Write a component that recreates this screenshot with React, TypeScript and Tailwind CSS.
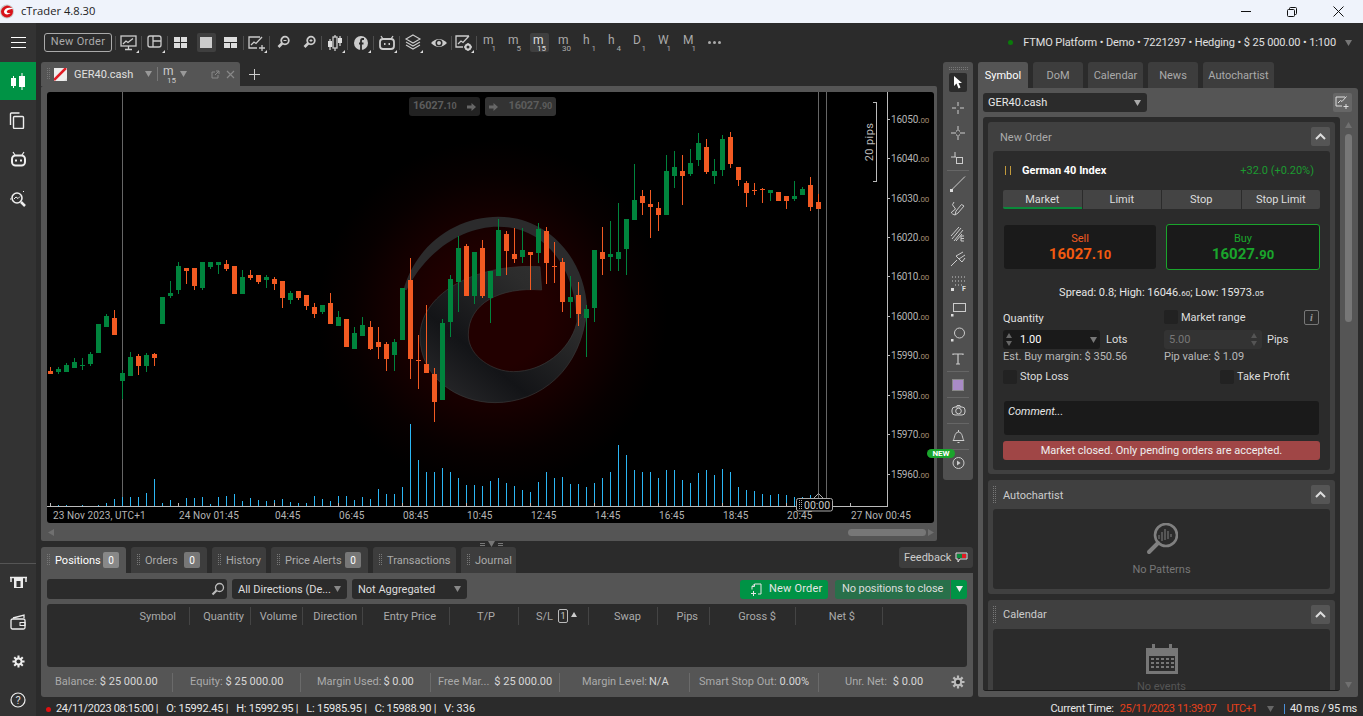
import React from "react";

const FONT = "Roboto,sans-serif";
const C: number[][] = [
[831,843,852,852,0],[831,837,846,852,1],[819,825,846,846,1],[804,816,834,834,1],[804,825,828,840,1],[786,792,822,828,1],[702,702,789,789,1],[672,678,711,711,1],[660,684,735,735,0],[840,849,873,927,1],
[786,801,858,858,1],[792,798,828,855,0],[789,795,828,846,1],[789,792,804,828,0],[621,621,702,702,1],[573,609,618,624,1],[516,528,600,612,1],[534,534,543,582,0],[534,534,588,600,0],[516,516,594,600,1],
[516,516,531,537,1],[516,516,525,552,1],[510,522,537,543,0],[528,528,612,612,0],[540,561,612,612,1],[540,555,564,570,0],[555,555,576,582,0],[555,561,570,594,1],[561,567,582,600,0],[573,573,624,654,0],
[603,609,630,642,1],[603,603,624,630,0],[615,615,648,660,0],[639,651,672,684,0],[645,645,666,672,1],[609,639,702,702,0],[663,681,708,708,1],[687,687,771,771,0],[711,729,777,777,1],[681,705,738,738,1],
[693,711,777,780,0],[711,756,771,807,0],[756,762,807,843,0],[747,756,795,843,1],[594,594,750,750,1],[504,570,807,867,0],[735,810,813,897,0],[645,822,849,849,0],[834,852,936,996,0],[687,699,930,930,1],
[555,567,696,741,1],[438,474,576,666,1],[462,468,618,618,0],[486,486,618,642,1],[450,474,618,624,0],[543,543,624,699,1],[387,420,558,558,1],[423,432,483,555,0],[414,492,507,519,0],[414,480,501,519,1],
[486,486,495,600,0],[399,417,489,519,1],[411,423,519,582,0],[456,528,531,579,0],[504,516,636,666,0],[558,621,636,684,1],[576,615,672,708,0],[645,657,684,801,1],[480,480,654,696,1],[411,486,507,555,0],
[393,492,501,543,1],[339,486,507,543,1],[387,387,477,555,1],[222,330,390,390,1],[300,318,339,375,0],[300,342,351,444,0],[336,354,375,423,0],[195,243,375,375,1],[183,231,258,294,1],[195,243,258,345,0],
[177,219,252,258,1],[129,159,210,228,1],[147,171,246,252,0],[207,243,258,282,1],[135,147,240,258,1],[126,141,222,234,0],[231,231,270,288,0],[273,279,309,351,0],[279,300,303,315,0],[294,297,300,339,0],
[300,300,309,333,1],[306,306,333,333,0],[318,318,333,357,0],[273,318,327,333,1],[291,297,315,315,1],[261,285,351,363,0],[312,336,357,357,0],
];
const VZ = [372,375,375,378,375,378,375,369,357,351,351,351,339,297,369,360,369,354,354,351,372,351,348,342,363,354,360,363,360,357,366,369,369,348,357,363,348,348,360,351,357,327,342,342,321,132,240,276,276,264,276,294,315,315,318,303,294,309,318,330,336,306];
const VA = [472,478,477,484,484,487,483,478,472,445,455,470,472,472,478,470,470,480,483,473,470,475,469,472,487,490,491,494,495,494,495,497,497,495,498];
const vols: number[] = [...VZ.map((z) => 380 + z / 3), ...VA];
const prices = [["16050",119],["16040",158],["16030",197.5],["16020",237],["16010",276],["16000",316],["15990",355],["15980",394.6],["15970",434],["15960",473.6]] as [string, number][];
const times = [["23 Nov 2023, UTC+1",53,50],["24 Nov 01:45",179,178],["04:45",275,274],["06:45",339,338],["08:45",403,402],["10:45",467,466],["12:45",531,530],["14:45",595,594],["16:45",659,658],["18:45",723,722],["20:45",787,786],["27 Nov 00:45",851,850]] as [string, number, number][];

const Svg = ({ s = 20, w, h, vb, children, className = "" }: any) => (
  <svg width={w ?? s} height={h ?? s} viewBox={vb ?? "0 0 20 20"} fill="none" stroke="currentColor" strokeWidth={1.3} className={`shrink-0 ${className}`}>{children}</svg>
);
const Corner = () => <polygon points="20,17 20,20 17,20" fill="#ddd" stroke="none" />;
const Caret = ({ c = "#999" }: { c?: string }) => (
  <svg width="7" height="6" viewBox="0 0 7 6" className="shrink-0"><polygon points="0,0 7,0 3.5,6" fill={c} /></svg>
);
const Dots = ({ h = 12 }: { h?: number }) => (
  <svg width="3" height={h} className="shrink-0">
    {Array.from({ length: Math.floor(h / 2) }).map((_, i) => (
      <g key={i} fill="#777"><rect x="0" y={i * 2} width="1" height="1" /><rect x="2" y={i * 2} width="1" height="1" /></g>
    ))}
  </svg>
);

const Chevron = () => (
  <div className="w-[19px] h-[19px] rounded-[2px] bg-[#555] flex items-center justify-center text-[#ddd]">
    <Svg w={11} h={7} vb="0 0 11 7"><path d="M1 6 L5.5 1.5 L10 6" strokeWidth={2} /></Svg>
  </div>
);

const icons: Record<string, React.ReactNode> = {
  monitor: <Svg><rect x="2" y="3" width="15" height="10" /><path d="M4 11 l3-3 2 1.5 5-4M9.5 13v3M6 16.5h7" /><Corner /></Svg>,
  layout: <Svg><rect x="3" y="3" width="13" height="11" rx="2" /><path d="M8 3v11M8 8h8" /><Corner /></Svg>,
  grid: <Svg><g fill="#ddd" stroke="none"><rect x="3" y="4" width="6" height="5" /><rect x="10" y="4" width="6" height="5" /><rect x="3" y="10" width="6" height="5" /><rect x="10" y="10" width="6" height="5" /></g></Svg>,
  single: <Svg><rect x="4" y="4" width="12" height="11" fill="#ccc" stroke="none" /></Svg>,
  split: <Svg><g fill="#ddd" stroke="none"><rect x="3" y="4" width="13" height="5" /><rect x="3" y="10" width="6" height="5" /><rect x="10" y="10" width="6" height="5" /></g></Svg>,
  add: <Svg><path d="M13 4H2v11h8M4 12l3-3 2 1.5 6-6.5M15 12v6M12 15h6" /><Corner /></Svg>,
  zoomOut: <Svg><circle cx="12" cy="7.500" r="3.800" strokeWidth={1.800} /><path d="M9.500 10 L5.500 14" strokeWidth={2.600} /><path d="M10.500 7.500h3" strokeWidth={1} /></Svg>,
  zoomIn: <Svg><circle cx="12" cy="7.500" r="3.800" strokeWidth={1.800} /><path d="M9.500 10 L5.500 14" strokeWidth={2.600} /><path d="M10.500 7.500h3M12 6v3" strokeWidth={1} /></Svg>,
  candles: <Svg><path d="M5 6v11M10 2v16M15 3v10" /><rect x="3" y="8" width="4" height="6" fill="#ddd" stroke="none" /><rect x="8" y="4" width="4" height="11" fill="#2b2b2b" /><rect x="13" y="5" width="4" height="5" fill="#ddd" stroke="none" /><Corner /></Svg>,
  fb: <Svg><circle cx="10" cy="10" r="7" fill="#ccc" stroke="none" /><path d="M13 6h-1.500Q10 6 10 8v9M8 10.500h4.500" stroke="#2b2b2b" strokeWidth={1.800} /><Corner /></Svg>,
  robot: <Svg><path d="M4 3l2 3M16 3l-2 3" /><rect x="3" y="6" width="14" height="10" rx="3" strokeWidth={1.800} /><path d="M7 11h1.500M11.500 11H13" strokeWidth={2} /><Corner /></Svg>,
  layers: <Svg><path d="M10 2l7 4-7 4-7-4zM3 9l7 4 7-4M3 12l7 4 7-4" strokeWidth={1.100} /><Corner /></Svg>,
  eye: <Svg><path d="M2 10q8-8 16 0q-8 8-16 0z" fill="#ccc" stroke="none" /><circle cx="10" cy="10" r="3.500" fill="#2b2b2b" stroke="none" /><circle cx="10" cy="10" r="2" fill="#ccc" stroke="none" /></Svg>,
  gearChart: <Svg><path d="M15 3H2v11h7M4 11l3-3 2 1.500 6-6.500" /><circle cx="14" cy="14" r="2.500" strokeWidth={2} /><path d="M14 10v1.500M14 16.500V18M10 14h1.500M16.500 14H18" strokeWidth={1.400} /><Corner /></Svg>,
};

const toolbar: [string, number, string?][] = [["monitor",26],["layout",26],["grid",26],["single",25,"on"],["split",25],["add",26],["zoomOut",26],["zoomIn",26],["candles",26],["fb",26],["robot",26],["layers",26],["eye",26],["gearChart",25]];
const seps = new Set(["monitor","layout","grid","add","zoomOut","candles","fb","robot","layers","gearChart"]);
const tfs: [string, string, boolean?][] = [["m","1"],["m","5"],["m","15",true],["m","30"],["h","1"],["h","4"],["D","1"],["W","1"],["M","1"]];

const Sep = () => <div className="h-[14px] w-px bg-[#4e4e4e] shrink-0" />;

function Toolbar() {
  return (
    <div className="h-[39px] flex items-center pl-[8px] shrink-0">
      <div className="w-[68px] h-[19px] border border-[#aaa] rounded-[3px] text-[#aaa] flex items-center justify-center shrink-0 tracking-[0.3px]">New Order</div>
      <div className="w-[3px]" />
      {toolbar.map(([n, w, on]) => (
        <div key={n} style={{ width: w }} className="h-[19px] flex items-center shrink-0">
          {seps.has(n) ? <Sep /> : <div className="w-px" />}
          <div className="flex-1 h-[19px] flex items-center justify-center text-[#ccc]">
            <div className={`w-[19px] h-[19px] flex items-center justify-center rounded-[2px] ${on ? "bg-[#3f3f3f]" : ""}`}>{icons[n]}</div>
          </div>
        </div>
      ))}
      <Sep />
      <div className="w-px" />
      {tfs.map(([a, b, on], i) => (
        <div key={i} className="w-[25px] h-[19px] flex shrink-0">
          <div className={`ml-[2px] w-[19px] h-[19px] rounded-[2px] pl-[3px] relative text-[12px] leading-[15px] ${on ? "bg-[#3f3f3f] text-[#ddd]" : "text-[#aaa]"}`}>
            {a}
            <span className="absolute left-[3px] w-[13px] text-right top-[11px] text-[8px] leading-[9px]">{b}</span>
          </div>
        </div>
      ))}
      <div className="ml-[5px] flex gap-[2px]">
        {[0, 1, 2].map((i) => <div key={i} className="w-[3px] h-[3px] rounded-full bg-[#aaa]" />)}
      </div>
      <div className="ml-auto flex items-center pr-[11px] text-[#e0e0e0]">
        <div className="w-[5px] h-[5px] rounded-full bg-[#0a7a0a] mr-[10px]" />
        <span className="whitespace-nowrap mt-[1px] tracking-[-0.11px]">FTMO Platform • Demo • 7221297 • Hedging • $ 25 000.00 • 1:100</span>
        <div className="ml-[9px]"><Caret c="#777" /></div>
      </div>
    </div>
  );
}

function Chart() {
  return (
    <div className="relative w-[887px] h-[431px] bg-black rounded-[3px] overflow-hidden">
      <svg width="887" height="431" viewBox="47 92 887 431" className="block">
        <defs>
          <radialGradient id="glow" gradientUnits="userSpaceOnUse" cx="492" cy="315" r="175">
            <stop offset="0.3" stopColor="#220000" />
            <stop offset="0.55" stopColor="#160000" />
            <stop offset="0.8" stopColor="#070000" />
            <stop offset="1" stopColor="#000" />
          </radialGradient>
          <linearGradient id="sw" x1="0" y1="1" x2="1" y2="0">
            <stop offset="0" stopColor="#2e2e30" />
            <stop offset="0.35" stopColor="#131417" />
            <stop offset="0.75" stopColor="#2c2c2c" />
            <stop offset="1" stopColor="#333" />
          </linearGradient>
        </defs>
        <circle cx="492" cy="315" r="175" fill="url(#glow)" />
        <g transform="translate(400 90) scale(0.3333)">
          <path d="M10 600 C50 460 170 380 295 380 C440 380 555 500 562 660 L530 700 C530 530 430 410 295 410 C190 410 80 480 20 600Z" fill="#2b2b2c" />
          <path d="M420 530 L425 600 C300 590 205 640 205 735 C205 800 280 845 340 845 C430 845 510 780 530 700 L560 660 C545 840 420 938 285 938 C170 938 60 860 60 740 C60 620 210 520 420 530Z" fill="url(#sw)" stroke="#3a3a3a" strokeWidth="2" />
        </g>
        <g shapeRendering="crispEdges">
          <line x1="122.5" y1="92" x2="122.5" y2="506" stroke="#666" />
          <line x1="818.5" y1="92" x2="818.5" y2="506" stroke="#666" />
          <line x1="826.5" y1="92" x2="826.5" y2="506" stroke="#666" />
          {vols.map((y, i) => y < 506 ? <rect key={i} x={50 + 8 * i} y={y} width="1" height={506 - y} fill="#2bb6f4" /> : null)}
          {C.map((c, i) => {
            const col = c[4] ? "#00843d" : "#f25a22";
            return (
              <g key={i} fill={col}>
                <rect x={50 + 8 * i} y={90 + c[0] / 3} width="1" height={(c[3] - c[0]) / 3} />
                <rect x={48 + 8 * i} y={90 + c[1] / 3} width="5" height={(c[2] - c[1]) / 3} />
              </g>
            );
          })}
          <rect x="47" y="506" width="841" height="1" fill="#bbb" />
          <rect x="887" y="92" width="1" height="415" fill="#bbb" />
          {times.map(([t, , x]) => <rect key={t} x={x} y="503" width="1" height="3" fill="#bbb" />)}
          {prices.map(([p, y]) => <rect key={p} x="888" y={y} width="2" height="1" fill="#bbb" />)}
          <path d="M873 102.5h3.5v79h-3.5" stroke="#bbb" fill="none" />
        </g>
        <g fontFamily={FONT} fontSize="10" fill="#b4b4b4">
          {prices.map(([p, y]) => (
            <text key={p} x="891" y={y + 4} letterSpacing="-0.2">{p}.<tspan fontSize="8" fill="#a08a70">00</tspan></text>
          ))}
          {times.map(([t, x]) => <text key={t} x={x} y="519" letterSpacing="0.1">{t}</text>)}
          <text transform="translate(873 142) rotate(-90)" textAnchor="middle" fontSize="11" letterSpacing="0.4" fill="#bbb">20 pips</text>
        </g>
        <path d="M814 498 L818.5 493.5 L823 498" stroke="#aaa" fill="none" />
        <rect x="796.5" y="498.5" width="36" height="12.500" rx="2" fill="#000" stroke="#aaa" />
        <g fill="#aaa">{[500, 502, 504, 506, 508].map((y) => <g key={y}><rect x="799" y={y} width="1" height="1" /><rect x="801" y={y} width="1" height="1" /></g>)}</g>
        <text x="804" y="508.500" fontFamily={FONT} fontSize="10.500" fill="#ccc">00:00</text>
      </svg>
      <div className="absolute left-[362px] top-[5px] flex gap-[5px] font-bold text-[#5c5c5c]">
        <PriceChip bg="bg-[#222]" v="16027." d="10" arrow="r" />
        <PriceChip bg="bg-[#333]" v="16027." d="90" arrow="l" />
      </div>
    </div>
  );
}

const PriceChip = ({ bg, v, d, arrow }: any) => (
  <div className={`w-[71px] h-[19px] rounded-[3px] ${bg} flex items-center px-[4px] justify-between text-[#5c5c5c]`}>
    {arrow === "l" && <Arrow />}
    <span className="text-[11px] tracking-[-0.2px] whitespace-nowrap">{v}<span className="text-[9px]">{d}</span></span>
    {arrow === "r" && <Arrow />}
  </div>
);
const Arrow = () => <svg width="9" height="8" viewBox="0 0 9 8" className="shrink-0"><path d="M0 2.500h4.500V0L9 4 4.500 8V5.500H0z" fill="#666" /></svg>;

function ChartPanel() {
  return (
    <div className="w-[896px] flex flex-col shrink-0">
      <div className="h-[24px] flex items-end shrink-0">
        <div className="w-[199px] h-[24px] bg-[#555] rounded-t-[3px] flex items-center text-[#e0e0e0]">
          <div className="ml-[6px]"><Dots /></div>
          <svg width="13" height="13" viewBox="0 0 13 13" className="ml-[4px] shrink-0"><rect width="13" height="13" fill="#eee" /><path d="M0 12 L12 0" stroke="#e01b24" strokeWidth="2.500" /><polygon points="13,10 13,13 10,13" fill="#ddd" /></svg>
          <span className="ml-[7px] mt-[2px] w-[62px] whitespace-nowrap">GER40.cash</span>
          <div className="ml-[9px]"><Caret /></div>
          <div className="ml-[5px] w-px h-[14px] bg-[#777]" />
          <div className="ml-[5px] w-[18px] h-[20px] relative text-[12px] leading-[14px] text-[#ccc]">m<span className="absolute left-0 w-[13px] text-right top-[13px] text-[8px] leading-[8px]">15</span></div>
          <div className="-ml-[1px]"><Caret /></div>
          <div className="ml-[24px] text-[#888]"><Svg s={9} vb="0 0 9 9"><path d="M7 5v3H1V2h3M5 1h3v3M8 1L4 5" strokeWidth={1} /></Svg></div>
          <div className="ml-[6px] text-[#888]"><Svg s={9} vb="0 0 9 9"><path d="M1 1l7 7M8 1l-7 7" strokeWidth={1.200} /></Svg></div>
        </div>
        <div className="ml-[9px] h-[24px] flex items-center text-[#ccc]"><Svg s={11} vb="0 0 11 11"><path d="M5.500 0v11M0 5.500h11" strokeWidth={1} /></Svg></div>
      </div>
      <div className="h-[455px] bg-[#555] rounded-[2px] pt-[6px] pl-[6px] flex flex-col">
        <Chart />
        <div className="h-[18px] flex items-center pl-[1px] pr-[3px] text-[#777]">
          <svg width="6" height="7" viewBox="0 0 6 7"><polygon points="6,0 6,7 0,3.500" fill="#707070" /></svg>
          <div className="ml-auto w-[78px] h-[7px] rounded-full bg-[#777]" />
          <svg width="6" height="7" viewBox="0 0 6 7" className="ml-[2px]"><polygon points="0,0 0,7 6,3.500" fill="#707070" /></svg>
        </div>
      </div>
    </div>
  );
}

const pal: (string | [string, React.ReactNode])[] = [
  "s",
  ["cross", <Svg s={14} vb="0 0 14 14"><path d="M7 1v4M7 9v4M1 7h4M9 7h4" strokeWidth={1} /></Svg>],
  ["cross2", <Svg s={16} vb="0 0 16 16"><path d="M8 1v5M8 10v5M1 8h5M10 8h5M6 6h1M9 6h1M6 10h1M9 10h1" strokeWidth={1} /></Svg>],
  ["cross3", <Svg s={16} vb="0 0 16 16"><path d="M5 2v5M1 7h5" strokeWidth={1} /><rect x="6.500" y="7.500" width="6" height="6" strokeWidth={1} /></Svg>],
  "-",
  ["line", <Svg s={17} vb="0 0 17 17"><path d="M15 1.500L2 14.500" strokeWidth={1} /><rect x="0" y="14" width="3" height="3" fill="#ddd" stroke="none" /></Svg>],
  ["pen", <Svg s={16} vb="0 0 16 16"><path d="M4 1Q1 4 4 6t-1 4 2 4M14 5l-6 7-3 2 1-4 5.500-6.500z" strokeWidth={1} /></Svg>],
  ["fib", <Svg s={16} vb="0 0 16 16"><path d="M1 10L9 1M2 13L11 2M4 15L13 4M6 15l6-7" strokeWidth={1} /><path d="M11 10h3M11 12.500h3M11 15h3M11 10v5" strokeWidth={1} /></Svg>],
  ["fork", <Svg s={16} vb="0 0 16 16"><path d="M1 15l6-6M6 5l3 3 3 3M6 5l7-4M9 8l6-4M12 11l3-4" strokeWidth={1} /></Svg>],
  ["dots", <Svg s={17} vb="0 0 17 17"><path d="M2 2h14M2 6h14M5 10h7" strokeWidth={1} strokeDasharray="1 2" /><rect x="1" y="13" width="3" height="3" fill="#ddd" stroke="none" /><text x="12" y="16" fontSize="7" fill="#ddd" stroke="none" fontWeight="700">F</text></Svg>],
  ["rect", <Svg s={17} vb="0 0 17 17"><rect x="3.500" y="3.500" width="12" height="8" strokeWidth={1} /><rect x="1" y="14" width="2.500" height="2.500" fill="#ddd" stroke="none" /></Svg>],
  ["circ", <Svg s={17} vb="0 0 17 17"><circle cx="9.500" cy="8" r="5" strokeWidth={1} /><rect x="1" y="14" width="2.500" height="2.500" fill="#ddd" stroke="none" /></Svg>],
  ["T", <Svg s={14} vb="0 0 14 14"><path d="M2 3V2h10v1M7 2v10M5 12h4" strokeWidth={1.200} /></Svg>],
  "-",
  ["swatch", <div className="w-[12px] h-[12px] bg-[#a98bc7] border border-[#888]" />],
  "-",
  ["cam", <Svg s={15} vb="0 0 15 15"><rect x="1" y="4" width="13" height="8" rx="3" strokeWidth={1} /><circle cx="7.500" cy="8" r="2.800" strokeWidth={1} /><path d="M5 4l1-1.500h3L10 4" strokeWidth={1} /></Svg>],
  "-",
  ["bell", <Svg s={15} vb="0 0 15 15"><path d="M2 11.500h11c-2-2-1-8-5.500-8.500C3 3.500 4 9.500 2 11.500zM6.500 13.500h2M7.500 1v2" strokeWidth={1} /></Svg>],
  "-",
  ["replay", <Svg s={15} vb="0 0 15 15"><circle cx="7.500" cy="8" r="5.500" strokeWidth={1} /><path d="M6 5.500l3.500 2.500L6 10.500z" fill="#ccc" stroke="none" /></Svg>],
];

function Palette() {
  return (
    <div className="relative w-[30px] h-[418px] bg-[#505050] rounded-[3px] flex flex-col items-center pt-[5px] shrink-0">
      <div className="rotate-90 h-[3px] flex items-center justify-center w-[3px] mb-[3px]"><Dots h={20} /></div>
      <div className="w-[18px] h-[19px] rounded-[2px] bg-[#2b2b2b] flex items-center justify-center shrink-0 mb-[3px]">
        <svg width="10" height="13" viewBox="0 0 10 13"><path d="M1 0v10l2.500-2.500 2 5 2-1-2-4.500H9z" fill="#fff" /></svg>
      </div>
      {pal.slice(1).map((p, i) =>
        p === "-" ? (
          <div key={i} className="w-[22px] h-px bg-[#666] shrink-0" />
        ) : (
          <div key={i} className="h-[25px] w-[30px] flex items-center justify-center text-[#ccc] shrink-0">{(p as any)[1]}</div>
        )
      )}
      <div className="absolute left-[-16px] top-[387px] w-[28px] h-[9px] rounded-full bg-[#1aa52c] text-white font-bold text-[8px] leading-[9px] text-center">NEW</div>
    </div>
  );
}

const btabs: [string, number, boolean?, boolean?][] = [["Positions",85,true,true],["Orders",76,true],["History",54],["Price Alerts",97,true],["Transactions",83],["Journal",55]];
const cols: [string, number, number][] = [["Symbol",143,13],["Quantity",61,6],["Volume",52,5],["Direction",60,5],["Entry Price",87,13],["T/P",69,23],["S/L",70,0],["Swap",69,16],["Pips",52,11],["Gross $",86,19],["Net $",87,27]];
const DarkSelect = ({ w, t }: { w: number; t: string }) => (
  <div style={{ width: w }} className="h-[20px] rounded-[3px] bg-[#2b2b2b] flex items-center pl-[6px] pr-[6px] text-[#ddd] shrink-0">
    <span className="flex-1 whitespace-nowrap mt-[2px]">{t}</span><Caret c="#888" />
  </div>
);

const stat: [string, string, number, number, number][] = [["Balance:","$ 25 000.00",8,126,3],["Equity:","$ 25 000.00",17,128,3],["Margin Used:","$ 0.00",16,130,2],["Free Mar...","$ 25 000.00",7,129,5],["Margin Level:","N/A",22,130,2],["Smart Stop Out:","0.00%",9,129,3]];

function BottomPanel() {
  return (
    <div className="flex flex-col">
      <div className="h-[6px] flex items-center justify-center pr-[32px]"><div className="flex gap-[3px] items-center"><div className="w-[5px] h-[3px] border-y border-[#777]" /><Caret c="#777" /><div className="w-[5px] h-[3px] border-y border-[#777]" /></div></div>
      <div className="h-[26px] flex gap-[5px] shrink-0">
        {btabs.map(([t, w, n, a]) => (
          <div key={t} style={{ width: w }} className={`h-[26px] rounded-t-[3px] flex items-center pl-[6px] ${a ? "bg-[#555] text-white" : "bg-[#3d3d3d] text-[#aaa]"}`}>
            <Dots />
            <span className="ml-[5px] mt-[2px] whitespace-nowrap">{t}</span>
            {n && <span className={`ml-auto mr-[7px] w-[16px] h-[16px] rounded-[2px] text-center leading-[17px] text-[10px] text-white ${a ? "bg-[#888]" : "bg-[#777]"}`}>0</span>}
          </div>
        ))}
        <div className="ml-auto w-[74px] h-[21px] rounded-[3px] bg-[#3d3d3d] flex items-center pl-[5px] text-[#ccc]">
          <span className="mt-[2px]">Feedback</span>
          <svg width="13" height="12" viewBox="0 0 13 12" className="ml-[4px]"><path d="M1 1h11v6H5L3 10V7H1z" fill="none" stroke="#ddd" /><rect x="2" y="2" width="5" height="4" fill="#0a8a3a" /><rect x="7" y="2" width="4" height="4" fill="#e01b24" /></svg>
        </div>
      </div>
      <div className="h-[124px] bg-[#555] rounded-b-[3px] flex flex-col px-[6px] pt-[6px]">
        <div className="h-[20px] flex gap-[5px] items-center shrink-0">
          <div className="w-[180px] h-[20px] rounded-[3px] bg-[#2b2b2b] flex items-center justify-end pr-[2px] text-[#bbb]">
            <Svg s={14} vb="0 0 14 14"><circle cx="8.500" cy="5.500" r="4" strokeWidth={1.300} /><path d="M5.500 8.500L1.500 12.500" strokeWidth={2.200} /></Svg>
          </div>
          <DarkSelect w={115} t="All Directions (De..." />
          <DarkSelect w={115} t="Not Aggregated" />
          <div className="ml-auto w-[88px] h-[19px] rounded-[3px] bg-[#009345] flex items-center pl-[9px] text-[#e6e6e6]">
            <Svg s={13} vb="0 0 13 13"><path d="M3 6.500V3.500L5.500 1H12v10H9M5.500 1v2.500H3M4.500 8v5M2 10.500h5" strokeWidth={1} /></Svg>
            <span className="ml-[7px] tracking-[0.2px]">New Order</span>
          </div>
          <div className="ml-[2px] w-[132px] h-[19px] rounded-[3px] overflow-hidden flex text-[#ddd]">
            <div className="w-[115px] bg-[#28704a] flex items-center pl-[7px] whitespace-nowrap tracking-[-0.1px]">No positions to close</div>
            <div className="flex-1 bg-[#009345] flex items-center justify-center border-l border-[#555]"><Caret c="#eee" /></div>
          </div>
        </div>
        <div className="mt-[5px] h-[63px] rounded-[3px] bg-[#2b2b2b] flex pt-[3px] shrink-0">
          {cols.map(([t, w, p]) => (
            <div key={t} style={{ width: w, paddingRight: p }} className="h-[18px] flex items-center justify-end text-[#aaa] border-r border-[#444]">
              {t === "S/L" ? (
                <div className="flex items-center w-full pl-[17px]">
                  <span className="mt-[2px]">S/L</span>
                  <span className="ml-[5px] w-[10px] h-[14px] border border-[#bbb] rounded-[2px] text-[9px] leading-[12px] text-center text-[#ccc]">1</span>
                  <svg width="6" height="5" viewBox="0 0 6 5" className="ml-[3px] mb-[3px]"><polygon points="3,0 6,5 0,5" fill="#ccc" /></svg>
                </div>
              ) : <span className="mt-[2px]">{t}</span>}
            </div>
          ))}
        </div>
        <div className="flex-1 flex items-center text-[#aaa]">
          {stat.map(([a, b, l, w, m]) => (
            <div key={a} style={{ width: w, paddingLeft: l }} className="h-[19px] flex items-center whitespace-nowrap shrink-0 border-r border-[#6a6a6a]">
              <span>{a}</span><span style={{ marginLeft: m }} className="text-[#d8d8d8]">{b}</span>
            </div>
          ))}
          <div className="pl-[26px] whitespace-nowrap">Unr. Net:<span className="ml-[6px] text-[#d8d8d8]">$ 0.00</span></div>
          <div className="ml-auto mr-[2px] text-[#bbb]"><Gear s={14} /></div>
        </div>
      </div>
    </div>
  );
}

const Gear = ({ s }: { s: number }) => (
  <svg width={s} height={s} viewBox="0 0 14 14" className="shrink-0">
    <g stroke="currentColor" strokeWidth="2.200">
      <path d="M7 0.500v13M0.500 7h13M2.400 2.400l9.200 9.200M11.600 2.400l-9.200 9.200" />
    </g>
    <circle cx="7" cy="7" r="4.200" fill="currentColor" />
    <circle cx="7" cy="7" r="2.200" fill="#333" />
  </svg>
);

const Check = ({ c = "bg-[#222]" }: { c?: string }) => <div className={`w-[14px] h-[14px] rounded-[2px] shrink-0 ${c}`} />;

function OrderCard() {
  return (
    <div className="h-[352px] rounded-[3px] bg-[#404040] px-[5px] flex flex-col shrink-0">
      <div className="h-[29px] flex items-center shrink-0">
        <span className="ml-[7px] mt-[3px] text-[#aaa]">New Order</span>
        <div className="ml-auto"><Chevron /></div>
      </div>
      <div className="h-[319px] rounded-[3px] bg-[#2b2b2b] px-[10px] text-[#ddd]">
        <div className="h-[39px] flex items-center">
          <div className="ml-[2px] w-[6px] h-[9px] border-x border-[#c19a3c]" />
          <span className="ml-[11px] mt-[1px] font-bold text-white">German 40 Index</span>
          <span className="ml-auto mr-[6px] mt-[1px] text-[#1c9a30]">+32.0 (+0.20%)</span>
        </div>
        <div className="h-[19px] grid grid-cols-4 gap-px rounded-[2px] overflow-hidden text-center">
          {["Market", "Limit", "Stop", "Stop Limit"].map((t, i) => (
            <div key={t} className={`h-[19px] leading-[20px] bg-[#444] ${i === 0 ? "border-b-2 border-[#0a8a3a]" : ""}`}>{t}</div>
          ))}
        </div>
        <div className="mt-[15px] flex gap-[10px] pl-[1px]">
          <div className="w-[152px] h-[44px] mt-[1px] rounded-[3px] bg-[#1a1a1a] flex flex-col items-center pt-[7px]">
            <span className="text-[#f25a22] leading-[14px]">Sell</span>
            <span className="font-bold text-[15px] leading-[17px] text-[#f25a10]">16027.<span className="text-[13px]">10</span></span>
          </div>
          <div className="w-[154px] h-[46px] rounded-[3px] bg-[#1a1a1a] border border-[#1aa52c] flex flex-col items-center pt-[7px]">
            <span className="text-[#1aa52c] leading-[14px]">Buy</span>
            <span className="font-bold text-[15px] leading-[17px] text-[#1aa52c]">16027.<span className="text-[13px]">90</span></span>
          </div>
        </div>
        <div className="mt-[16px] h-[14px] leading-[14px] text-center text-[#e6e6e6]">Spread: 0.8; High: 16046.<span className="text-[8px]">60</span>; Low: 15973.<span className="text-[8px]">05</span></div>
        <div className="mt-[9px] grid grid-cols-[161px_1fr]">
          <div className="flex flex-col">
            <div className="h-[18px] mb-[3px] pt-[2px] flex items-center text-[#e0e0e0]">Quantity</div>
            <div className="flex items-center">
              <div className="w-[97px] h-[19px] rounded-[3px] bg-[#1a1a1a] flex items-center pl-[3px] pr-[3px] text-white">
                <svg width="6" height="13" viewBox="0 0 6 13"><polygon points="3,0 6,5 0,5" fill="#666" /><polygon points="3,13 6,8 0,8" fill="#666" /></svg>
                <span className="ml-[8px] mt-[1px] flex-1">1.00</span><Caret c="#777" />
              </div>
              <span className="ml-[6px] mt-[1px]">Lots</span>
            </div>
            <div className="h-[14px] leading-[16px] text-[#b8b8b8] whitespace-nowrap">Est. Buy margin: $ 350.56</div>
          </div>
          <div className="flex flex-col">
            <div className="h-[14px] mt-[1px] mb-[6px] flex items-center">
              <Check /><span className="ml-[3px] mt-[2px]">Market range</span>
              <div className="ml-auto mr-[1px] w-[15px] h-[15px] rounded-[2px] border border-[#777] flex items-center justify-center italic font-bold text-[10px] text-[#999] [font-family:'Liberation_Serif',serif]">i</div>
            </div>
            <div className="flex items-center">
              <div className="w-[98px] h-[19px] rounded-[3px] bg-[#333] flex items-center pl-[5px] pr-[5px] text-[#777]">
                <span className="flex-1 mt-[1px]">5.00</span>
                <svg width="6" height="13" viewBox="0 0 6 13"><polygon points="3,0 6,5 0,5" fill="#555" /><polygon points="3,13 6,8 0,8" fill="#555" /></svg>
              </div>
              <span className="ml-[5px] mt-[1px]">Pips</span>
            </div>
            <div className="h-[14px] leading-[16px] text-[#b8b8b8] whitespace-nowrap">Pip value: $ 1.09</div>
          </div>
        </div>
        <div className="mt-[6px] h-[14px] grid grid-cols-[217px_1fr]">
          <div className="flex items-center whitespace-nowrap"><Check /><span className="ml-[3px]">Stop Loss</span></div>
          <div className="flex items-center whitespace-nowrap"><Check /><span className="ml-[3px]">Take Profit</span></div>
        </div>
        <div className="mt-[18px] ml-[1px] w-[315px] h-[34px] rounded-[3px] bg-[#1a1a1a] pl-[4px] pt-[3px] italic text-[#e8e8e8]">Comment...</div>
        <div className="mt-[6px] h-[19px] rounded-[3px] bg-[#a04646] text-[#eee] text-center leading-[19px]">Market closed. Only pending orders are accepted.</div>
      </div>
    </div>
  );
}

function RightPanel() {
  return (
    <div className="w-[380px] flex flex-col shrink-0">
      <div className="h-[26px] flex gap-[5px] shrink-0">
        {[["Symbol",50,1],["DoM",50],["Calendar",55],["News",50],["Autochartist",71]].map(([t, w, a]) => (
          <div key={t as string} style={{ width: w as number }} className={`h-[26px] pt-[2px] rounded-t-[3px] flex items-center justify-center ${a ? "bg-[#555] text-white" : "bg-[#3d3d3d] text-[#aaa]"}`}>{t}</div>
        ))}
      </div>
      <div className="h-[609px] bg-[#555] rounded-b-[2px] rounded-tr-[3px] flex flex-col pl-[5px] overflow-hidden">
        <div className="h-[29px] flex items-start pt-[5px] shrink-0">
          <div className="w-[164px] h-[19px] rounded-[3px] bg-[#2b2b2b] flex items-center pl-[5px] pr-[6px] text-[#e8e8e8]"><span className="flex-1 mt-[1px]">GER40.cash</span><Caret c="#aaa" /></div>
          <div className="ml-[186px] w-[19px] h-[19px] rounded-[2px] bg-[#666] flex items-center justify-center text-[#ddd]">
            <Svg s={15} vb="0 0 15 15"><path d="M10 2H1v9h6M3 8l2.500-2.500 1.500 1 4.500-5M11 9v5M8.500 11.500h5" strokeWidth={1} /></Svg>
          </div>
        </div>
        <div className="flex h-[574px]">
          <div className="w-[357px] h-[574px] rounded-[3px] bg-[#2b2b2b] overflow-hidden px-[5px] pt-[5px] flex flex-col gap-[6px] border-b border-[#1a1a1a]">
            <OrderCard />
            <div className="h-[114px] rounded-[3px] bg-[#404040] px-[5px] flex flex-col shrink-0">
              <div className="h-[29px] flex items-center shrink-0">
                <Dots h={18} />
                <span className="ml-[7px] mt-[3px] text-[#ccc]">Autochartist</span>
                <div className="ml-auto"><Chevron /></div>
              </div>
              <div className="h-[80px] rounded-[3px] bg-[#2b2b2b] flex flex-col items-center pt-[14px] text-[#808080]">
                <svg width="32" height="32" viewBox="0 0 32 32" fill="none" stroke="currentColor">
                  <circle cx="20" cy="12" r="11" strokeWidth="2.600" />
                  <path d="M12 20L3 29" strokeWidth="4" strokeLinecap="round" />
                  <path d="M13 12v4M16 9v9M19 6v11M22 8v8M25 11v3" strokeWidth="1" />
                </svg>
                <span className="mt-[7px] text-[#777]">No Patterns</span>
              </div>
            </div>
            <div className="h-[200px] rounded-[3px] bg-[#404040] px-[5px] flex flex-col shrink-0">
              <div className="h-[29px] flex items-center shrink-0">
                <Dots h={18} />
                <span className="ml-[7px] mt-[1px] text-[#ccc]">Calendar</span>
                <div className="ml-auto"><Chevron /></div>
              </div>
              <div className="h-[170px] rounded-[3px] bg-[#2b2b2b] flex flex-col items-center pt-[15px] text-[#808080]">
                <svg width="34" height="31" viewBox="0 0 34 31">
                  <rect x="1" y="4" width="32" height="26" fill="#777" />
                  <rect x="7" y="0" width="3" height="6" fill="#777" /><rect x="24" y="0" width="3" height="6" fill="#777" />
                  <rect x="4" y="12" width="26" height="15" fill="#2b2b2b" />
                  {[14, 18, 22].map((y) => [6, 11, 16, 21, 26].map((x) => <rect key={`${x}${y}`} x={x} y={y} width="3" height="2" fill="#777" />))}
                </svg>
                <span className="mt-[4px] text-[#555]">No events</span>
              </div>
            </div>
          </div>
          <div className="ml-[5px] w-[7px] flex flex-col items-center">
            <svg width="7" height="6" viewBox="0 0 7 6" className="mt-[5px]"><polygon points="3.500,0 7,6 0,6" fill="#707070" /></svg>
            <div className="mt-[6px] w-[7px] h-[188px] rounded-full bg-[#777]" />
            <svg width="7" height="6" viewBox="0 0 7 6" className="mt-auto mb-[3px]"><polygon points="0,0 7,0 3.500,6" fill="#707070" /></svg>
          </div>
        </div>
      </div>
    </div>
  );
}

function StatusBar() {
  const it: [string, number, number][] = [["24/11/2023 08:15:00 |", 0, -0.33], ["O: 15992.45 |", 8, -0.2], ["H: 15992.95 |", 8, -0.2], ["L: 15985.95 |", 8, -0.2], ["C: 15988.90 |", 8, -0.2], ["V: 336", 8, 0]];
  return (
    <div className="h-[19px] pt-[5px] flex items-center pl-[10px] pr-[6px] text-[#e8e8e8] shrink-0">
      <div className="w-[5px] h-[5px] rounded-full bg-[#e01010] mr-[5px]" />
      {it.map(([t, m, l]) => <span key={t} style={{ marginLeft: m, letterSpacing: l }} className="whitespace-nowrap">{t}</span>)}
      <span className="ml-auto whitespace-nowrap tracking-[-0.2px]">Current Time:</span>
      <span className="ml-[6px] text-[#e8401a] whitespace-nowrap tracking-[-0.37px]">25/11/2023 11:39:07</span>
      <span className="ml-[10px] text-[#e8401a] tracking-[-0.5px]">UTC+1</span>
      <div className="ml-[10px]"><Caret c="#666" /></div>
      <div className="ml-[10px] w-px h-[10px] bg-[#4a90d9]" />
      <span className="ml-[5px] whitespace-nowrap tracking-[-0.3px]">40 ms / 95 ms</span>
    </div>
  );
}

const railTop: React.ReactNode[] = [
  <Svg s={18} vb="0 0 18 18"><rect x="4.500" y="5.500" width="10" height="12" rx="1" strokeWidth={1.400} /><path d="M1.500 14V3q0-1 1-1h8" strokeWidth={1.400} /></Svg>,
  <Svg s={17} vb="0 0 17 17"><path d="M3 1l2 3M14 1l-2 3" strokeWidth={1.200} /><rect x="2" y="4.500" width="13" height="10" rx="3.500" strokeWidth={2} /><path d="M5 9.500h2M10 9.500h2" strokeWidth={1.800} /></Svg>,
  <Svg s={18} vb="0 0 18 18"><circle cx="8" cy="8" r="5" strokeWidth={1.600} /><path d="M12 12l4 4" strokeWidth={2.500} /><path d="M5 9l2-2 2 1.500 2-2M1 9h1M14 2l1-1" strokeWidth={1} /></Svg>,
];
const railBottom: React.ReactNode[] = [
  <Svg s={17} vb="0 0 17 17"><path d="M0 2.500h17" stroke="#eee" strokeWidth={1.500} /><path d="M1 2v5M16 2v5" strokeWidth={1.500} /><path d="M4 3v10h9V3" fill="#eee" stroke="none" /><rect x="6.500" y="6" width="4" height="6" fill="#333" stroke="none" /></Svg>,
  <Svg s={17} vb="0 0 17 17"><rect x="1" y="5" width="14" height="10" rx="1.500" strokeWidth={1.300} /><path d="M3 4l11-3v3" strokeWidth={1.300} /><rect x="10" y="8.500" width="5" height="3" strokeWidth={1} /></Svg>,
  <Gear s={13} />,
  <Svg s={16} vb="0 0 16 16"><circle cx="8" cy="8" r="7" strokeWidth={1.200} /><text x="8" y="12" fontSize="11" fontFamily={FONT} textAnchor="middle" fill="#ddd" stroke="none">?</text></Svg>,
];

function Rail() {
  return (
    <div className="w-[36px] bg-[#333] flex flex-col items-center text-[#eee] shrink-0">
      <div className="h-[39px] w-full flex flex-col items-center justify-center gap-[4px]">
        {[0, 1, 2].map((i) => <div key={i} className="w-[15px] h-px bg-white" />)}
      </div>
      <div className="h-[38px] w-full bg-[#009345] flex items-center justify-center">
        <svg width="15" height="17" viewBox="0 0 15 17" fill="#fff">
          <rect x="0" y="5" width="5" height="8" /><rect x="2" y="3" width="1" height="12" />
          <rect x="8" y="3" width="6" height="11" /><rect x="10.500" y="0" width="1" height="17" />
        </svg>
      </div>
      {railTop.map((n, i) => <div key={i} className="h-[39.500px] w-full flex items-center justify-center">{n}</div>)}
      <div className="mt-auto w-full h-px bg-[#555]" />
      {railBottom.slice(0, 3).map((n, i) => <div key={i} className="h-[39px] w-full flex items-center justify-center text-[#eee]">{n}</div>)}
      <div className="h-[35px] pt-[3px] w-full flex items-center justify-center">{railBottom[3]}</div>
    </div>
  );
}

export default function App() {
  return (
    <div className="w-[1363px] h-[716px] overflow-hidden flex flex-col bg-[#2b2b2b] text-[11px] [font-family:Roboto,sans-serif]">
      <div className="h-[23px] bg-[#eff3fb] flex items-center shrink-0 text-[#222]">
        <svg width="15" height="15" viewBox="0 0 15 15" className="shrink-0">
          <circle cx="7" cy="7.500" r="7" fill="#c9c9c9" />
          <path d="M7 1.500a6 6 0 1 1-6 6 C1 5 3 2.500 7 1.500Z" fill="#d8121a" />
          <path d="M13.500 5 C10 2.500 4.500 3.500 4 7.500 C4 10.500 8 11.500 10.500 9 C8 9.500 6 8.500 7 7 C8 5.500 11 5 13.500 5Z" fill="#fff" />
        </svg>
        <span className="ml-[6px] text-[11.200px] [font-family:'Open_Sans',sans-serif]">cTrader 4.8.30</span>
        <div className="ml-auto flex items-center text-[#111]">
          <div className="w-[46px] flex justify-center"><div className="w-[10px] h-px bg-[#111]" /></div>
          <div className="w-[46px] flex justify-center">
            <svg width="10" height="10" viewBox="0 0 10 10" fill="none" stroke="#111"><rect x="0.500" y="2.500" width="7" height="7" rx="1" /><path d="M2.500 2V1.500q0-1 1-1h5q1 0 1 1v5q0 1-1 1H8" /></svg>
          </div>
          <div className="w-[48px] flex justify-center pr-[1px]">
            <svg width="11" height="11" viewBox="0 0 11 11" stroke="#111"><path d="M0.500 0.500l10 10M10.500 0.500l-10 10" /></svg>
          </div>
        </div>
      </div>
      <div className="flex-1 flex min-h-0">
        <Rail />
        <div className="flex-1 flex flex-col min-w-0">
          <Toolbar />
          <div className="h-[635px] pl-[5px] flex gap-[5px] shrink-0">
            <div className="w-[932px] flex flex-col shrink-0">
              <div className="h-[479px] flex gap-[6px] shrink-0">
                <ChartPanel />
                <Palette />
              </div>
              <BottomPanel />
            </div>
            <RightPanel />
          </div>
          <StatusBar />
        </div>
      </div>
    </div>
  );
}
